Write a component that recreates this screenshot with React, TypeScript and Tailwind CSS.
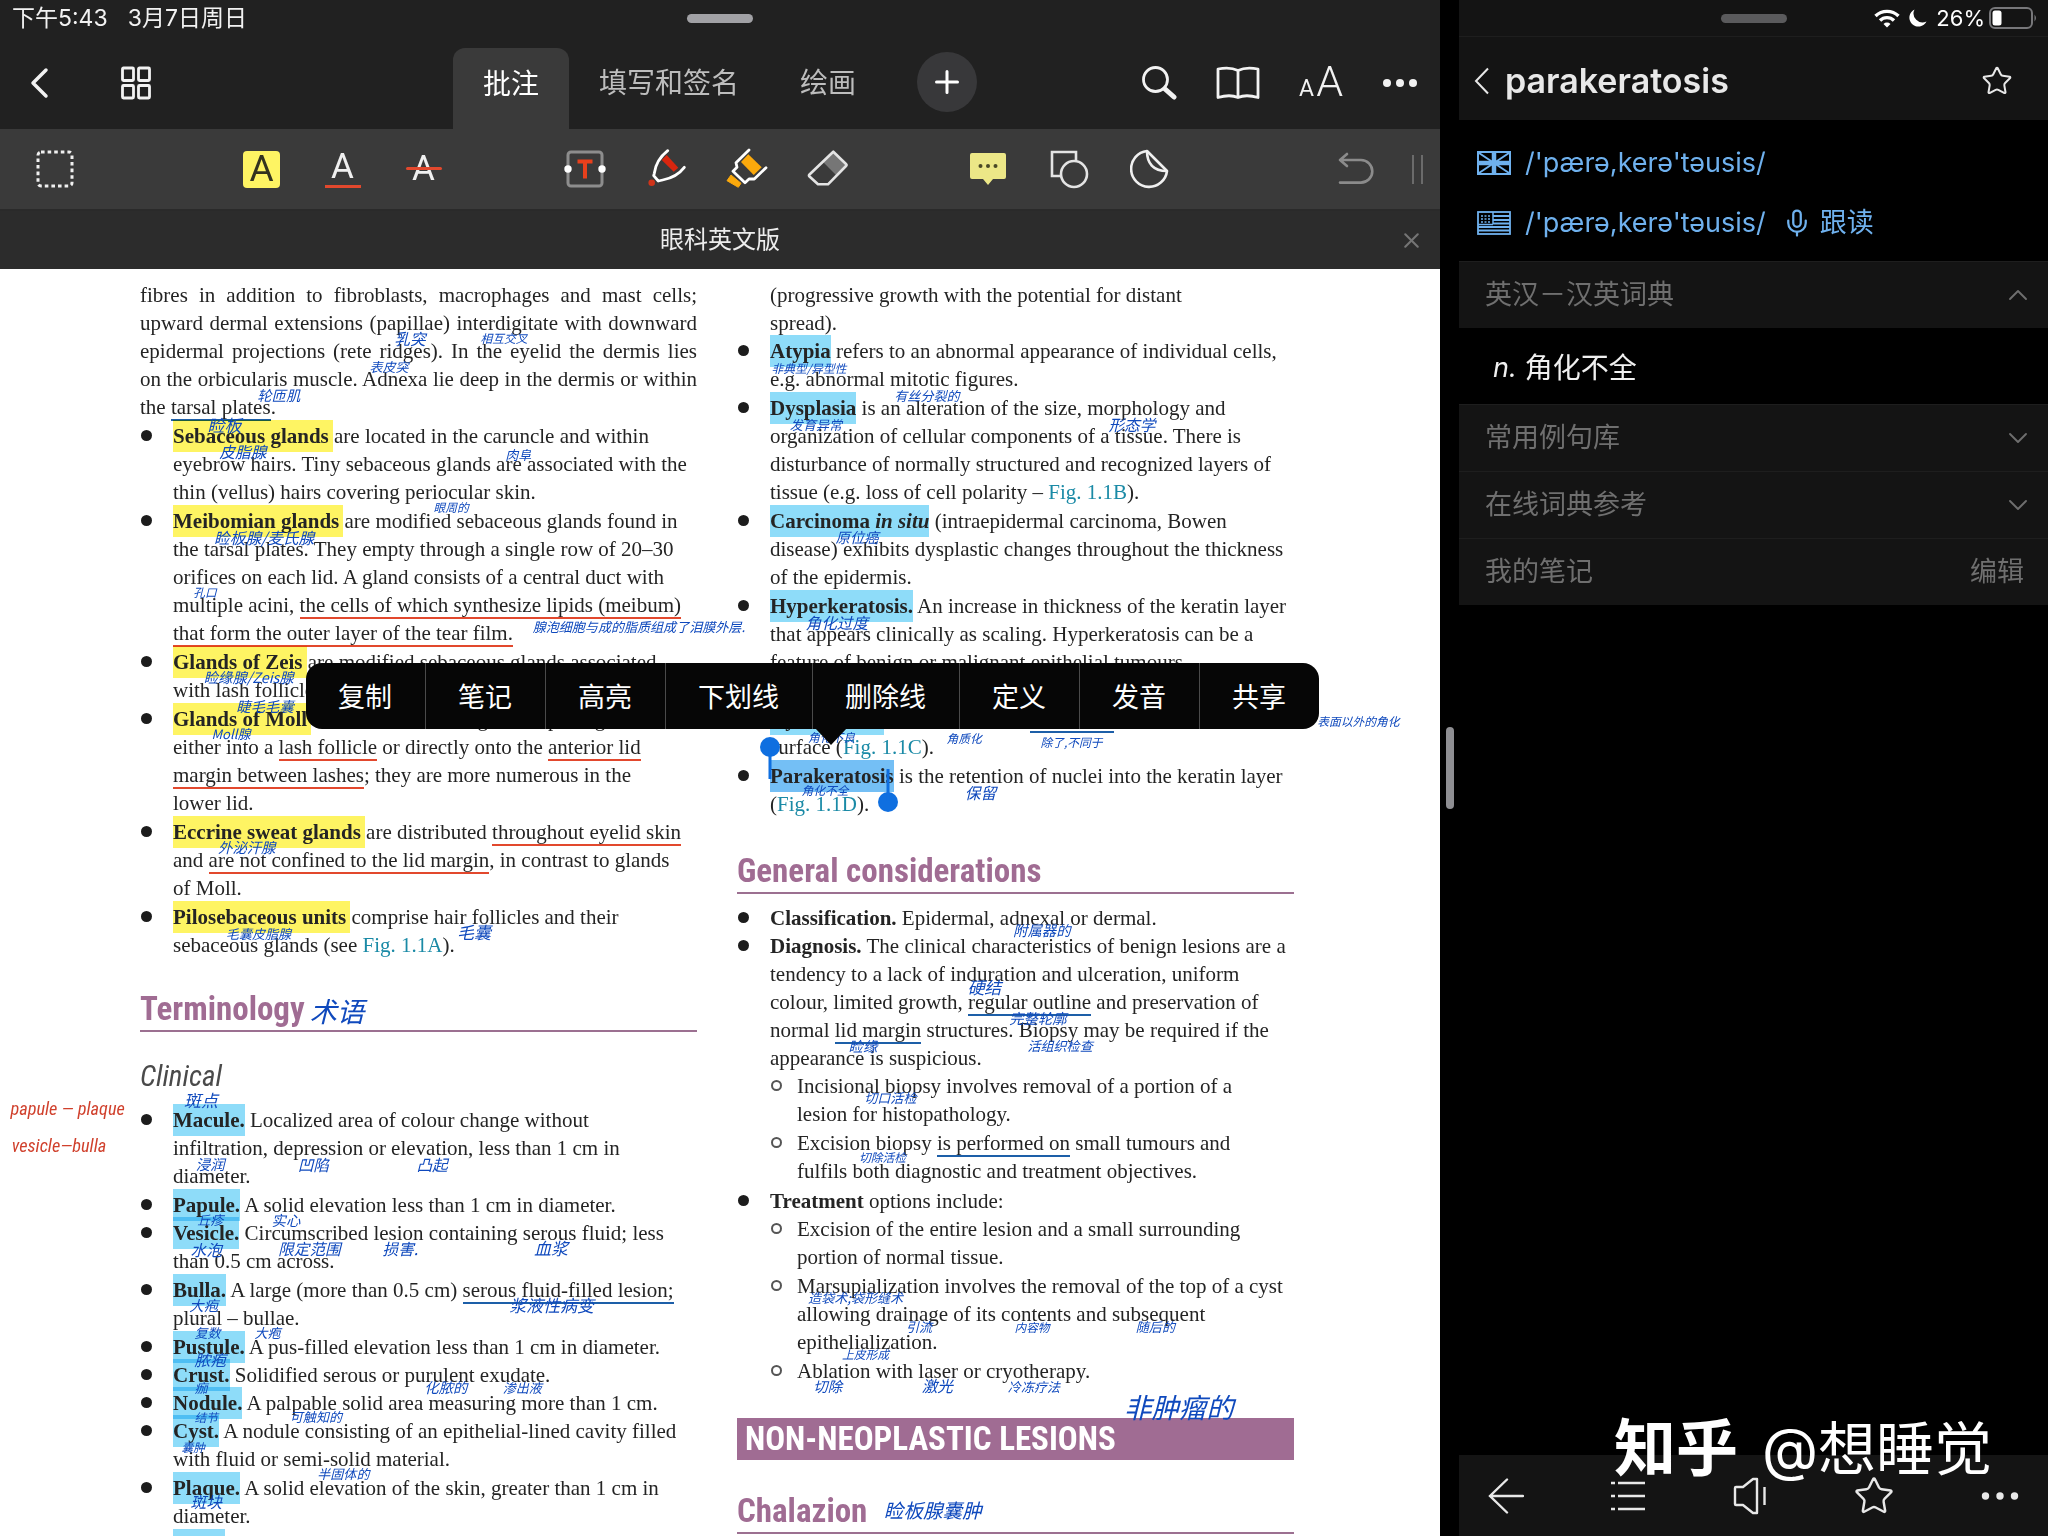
import React from 'react';
import { ChevronDown, ChevronUp, Mic, Star, X } from 'lucide-react';

type Props = { children?: React.ReactNode };

const Yellow = ({ children }: Props) => (
  <strong className="-mr-1 bg-[#fef463] py-1 pr-1 font-bold mix-blend-multiply">{children}</strong>
);
const Blue = ({ children }: Props) => (
  <strong className="bg-[#8edcf9] py-1 font-bold mix-blend-multiply">{children}</strong>
);
const Red = ({ children }: Props) => <span className="border-b-2 border-[#e2482d]">{children}</span>;
const Pen = ({ children }: Props) => <span className="border-b-2 border-[#1d5fa8]">{children}</span>;
const Fig = ({ children }: Props) => (
  <a href="#figure" className="text-[#1a8aa6]">
    {children}
  </a>
);

// A bulleted entry, one child per printed line
const Entry = ({ lines, children }: { lines: React.ReactNode[] } & Props) => (
  <li className={lines.length > 1 ? 'relative pb-px pl-[33px]' : 'relative pl-[33px]'}>
    <span className="absolute top-2 left-px size-[11px] rounded-full bg-[#1c1c1c]" />
    {lines.map((line, i) => (
      <div key={i}>{line}</div>
    ))}
    {children}
  </li>
);

const SubEntry = ({ lines }: { lines: React.ReactNode[] }) => (
  <li className="relative pb-px pl-[27px]">
    <span className="absolute top-2 left-px size-[11px] rounded-full border-2 border-[#555]" />
    {lines.map((line, i) => (
      <div key={i}>{line}</div>
    ))}
  </li>
);

const Heading = ({ children }: Props) => (
  <h2 className="border-b-2 border-[#9c7091] font-['Liberation_Sans_Narrow','Roboto_Condensed',sans-serif] text-[33px] leading-[42px] font-bold text-[#a06c93]">
    {children}
  </h2>
);

// x, baseline, size, text
const notes: [number, number, number, string][] = [
  [302, 264, 12, '乳突'],
  [368, 263, 9, '相互交叉'],
  [283, 285, 10, '表皮突'],
  [197, 307, 11, '轮匝肌'],
  [159, 331, 13, '睑板'],
  [168, 351, 12, '皮脂腺'],
  [387, 352, 10, '肉阜'],
  [332, 392, 9, '眼周的'],
  [164, 417, 12, '睑板腺/麦氏腺'],
  [148, 457, 9, '孔口'],
  [408, 484, 10, '腺泡细胞与成的脂质组成了泪膜外层.'],
  [156, 523, 11, '睑缘腺/Zeis腺'],
  [181, 545, 11, '睫毛毛囊'],
  [162, 566, 10, 'Moll腺'],
  [167, 653, 11, '外泌汗腺'],
  [173, 719, 10, '毛囊皮脂腺'],
  [350, 719, 13, '毛囊'],
  [237, 783, 21, '术语'],
  [141, 848, 13, '斑点'],
  [150, 896, 11, '浸润'],
  [228, 897, 12, '凹陷'],
  [319, 897, 12, '凸起'],
  [151, 938, 10, '丘疹'],
  [208, 939, 11, '实心'],
  [146, 962, 12, '水泡'],
  [213, 961, 12, '限定范围'],
  [293, 961, 12, '损害.'],
  [409, 961, 13, '血浆'],
  [145, 1004, 11, '大疱'],
  [390, 1005, 13, '浆液性病变'],
  [149, 1025, 10, '复数'],
  [195, 1025, 10, '大疱'],
  [149, 1046, 12, '脓疱'],
  [149, 1067, 10, '痂'],
  [325, 1067, 11, '化脓的'],
  [385, 1067, 10, '渗出液'],
  [149, 1089, 9, '结节'],
  [222, 1089, 10, '可触知的'],
  [139, 1112, 9, '囊肿'],
  [243, 1133, 10, '半固体的'],
  [146, 1155, 12, '斑块'],
  [591, 286, 9, '非典型/异型性'],
  [685, 307, 10, '有丝分裂的'],
  [605, 329, 10, '发育异常'],
  [849, 330, 12, '形态学'],
  [640, 416, 11, '原位癌'],
  [617, 482, 12, '角化过度'],
  [1009, 556, 9, '表面以外的角化'],
  [725, 569, 9, '角质化'],
  [797, 572, 9, '除了,不同于'],
  [619, 568, 9, '角化不良'],
  [614, 609, 9, '角化不全'],
  [739, 612, 12, '保留'],
  [776, 717, 11, '附属器的'],
  [741, 761, 13, '硬结'],
  [773, 784, 11, '完整轮廓'],
  [650, 806, 11, '睑缘'],
  [787, 805, 10, '活组织检查'],
  [662, 845, 10, '切口活检'],
  [658, 890, 9, '切除活检'],
  [619, 998, 10, '造袋术;袋形缝术'],
  [694, 1020, 10, '引流'],
  [777, 1020, 9, '内容物'],
  [870, 1020, 10, '随后的'],
  [645, 1041, 9, '上皮形成'],
  [623, 1066, 11, '切除'],
  [706, 1066, 12, '激光'],
  [772, 1066, 10, '冷冻疗法'],
  [861, 1086, 21, '非肿瘤的'],
  [677, 1163, 15, '睑板腺囊肿'],
];

const Ink = () => (
  <svg viewBox="0 206 1103 970" className="pointer-events-none absolute top-0 left-0 w-full" aria-label="Handwritten notes">
    <g fill="#0f49bd" fontFamily="'Noto Sans CJK SC', sans-serif" fontStyle="italic" fontWeight="400">
      {notes.map(([x, y, size, text]) => (
        <text key={`${x}-${y}`} x={x} y={y} fontSize={size}>
          {text}
        </text>
      ))}
    </g>
    <g fill="#d0402c" fontFamily="'Roboto Condensed', 'Liberation Sans Narrow', sans-serif" fontStyle="italic" fontSize="14">
      <text x="8" y="854">papule — plaque</text>
      <text x="9" y="882">vesicle—bulla</text>
    </g>
  </svg>
);

const ToolButton = ({ label, children }: { label: string } & Props) => (
  <button aria-label={label} className="flex h-20 w-[81px] items-center justify-center">
    {children}
  </button>
);

const Toolbar = () => (
  <div className="flex h-[82px] items-center border-b-2 border-[#2a2a2a] bg-[#3a3a3a] pl-3.5 text-[#f0f0f0]">
    <ToolButton label="Select">
      <svg width="40" height="40" viewBox="0 0 40 40" fill="none" stroke="currentColor" strokeWidth="3">
        <rect x="3" y="3" width="34" height="34" rx="3" strokeDasharray="3.6 3" />
      </svg>
    </ToolButton>
    <div className="ml-[126px] flex">
      <ToolButton label="Highlight">
        <span className="flex size-[37px] items-center justify-center rounded-sm bg-[#fef463] font-[Roboto] text-[37px] text-[#33331f]">A</span>
      </ToolButton>
      <ToolButton label="Underline">
        <span className="flex h-[37px] w-9 items-center justify-center border-b-3 border-[#e2482d] font-[Roboto] text-[35px]">A</span>
      </ToolButton>
      <ToolButton label="Strikethrough">
        <span className="relative flex h-[37px] w-9 items-center justify-center font-[Roboto] text-[35px]">
          A<span className="absolute top-4 left-0 h-[3px] w-full rounded bg-[#e2482d]" />
        </span>
      </ToolButton>
    </div>
    <div className="ml-20 flex">
      <ToolButton label="Text">
        <svg width="42" height="40" viewBox="0 0 42 40" fill="none">
          <rect x="4" y="3" width="34" height="34" rx="3" stroke="#8d8d8d" strokeWidth="3" />
          <circle cx="4" cy="20" r="3.700" fill="#fff" />
          <circle cx="38" cy="20" r="3.700" fill="#fff" />
          <path d="M13.500 12.500h15M21 12.500v17" stroke="#e8401c" strokeWidth="4" />
        </svg>
      </ToolButton>
      <ToolButton label="Pen">
        <svg width="40" height="40" viewBox="0 0 40 40" fill="none">
          <path d="M20.700 6 L32.300 18.700 L27.700 22.700 L15.700 11 Z" fill="#d9260f" />
          <path d="M21.700 1.700 Q10 11 8.300 24.300 L7.700 26.700 L12.300 32 L16.700 31 Q31 28 38.300 18.300" stroke="#fff" strokeWidth="2.800" strokeLinecap="round" strokeLinejoin="round" />
          <circle cx="5.700" cy="33.700" r="3.300" fill="#d0341a" />
        </svg>
      </ToolButton>
      <ToolButton label="Marker">
        <svg width="44" height="42" viewBox="0 0 44 42" fill="none">
          <path d="M23.300 6.300 L36.700 19.300 L28.700 27 L16 14 Z" fill="#fba90c" />
          <path d="M24 2 L11 14.700 L12 19.300 L8 23.300 L20 34.700 L24 31 L29.300 31 L41 19.700" stroke="#fff" strokeWidth="2.800" strokeLinecap="round" strokeLinejoin="round" />
          <path d="M6 27 L16 35.300 L13.300 39.300 L2 32.700 Z" fill="#fba90c" stroke="#fba90c" strokeLinejoin="round" />
        </svg>
      </ToolButton>
      <ToolButton label="Eraser">
        <svg width="42" height="40" viewBox="0 0 42 40" fill="none" strokeLinejoin="round">
          <path d="M16.300 13.300 L26.300 3 L39 16 L29 26 Z" fill="#767676" />
          <path d="M26.300 2.700 L39 15 Q40 16 39 17 L21 35.300 H11 L2.500 27.500 Q1.500 26.500 2.500 25.500 Z" stroke="#e4e4e4" strokeWidth="2.600" />
        </svg>
      </ToolButton>
    </div>
    <div className="ml-[79px] flex">
      <ToolButton label="Note">
        <svg width="38" height="34" viewBox="0 0 38 34">
          <path d="M3 1h32a2 2 0 0 1 2 2v22a2 2 0 0 1-2 2H24l-5 6-5-6H3a2 2 0 0 1-2-2V3a2 2 0 0 1 2-2z" fill="#ece787" />
          <g fill="#4a4826">
            <circle cx="11.500" cy="14" r="2" />
            <circle cx="19" cy="14" r="2" />
            <circle cx="26.500" cy="14" r="2" />
          </g>
        </svg>
      </ToolButton>
      <ToolButton label="Shapes">
        <svg width="40" height="40" viewBox="0 0 40 40" fill="none" stroke="#e4e4e4" strokeWidth="2.600">
          <path d="M12 27H3V3h24v8" />
          <circle cx="25" cy="25" r="13" />
        </svg>
      </ToolButton>
      <ToolButton label="Sticker">
        <svg width="40" height="40" viewBox="0 0 40 40" fill="none" stroke="#f0f0f0" strokeWidth="2.600" strokeLinejoin="round">
          <path d="M17 2 A18 18 0 1 0 37 22 Z" />
          <path d="M17 2 C17 14 23 22 37 22" />
        </svg>
      </ToolButton>
    </div>
    <div className="ml-auto flex items-center pr-[17px] text-[#8b8b8b]">
      <ToolButton label="Undo">
        <svg width="36" height="34" viewBox="0 0 36 34" fill="none" stroke="currentColor" strokeWidth="2.600" strokeLinecap="round" strokeLinejoin="round">
          <path d="M9 2 L2 8 L9 14 M2 8 H23 a11.300 11.300 0 0 1 0 22.600 H2" />
        </svg>
      </ToolButton>
      <div className="ml-4 h-[29px] w-[11px] border-x-2 border-[#6b6b6b]" />
    </div>
  </div>
);

const TopBar = () => (
  <header className="bg-[#212121] text-[#f2f2f2]">
    <div className="grid h-12 grid-cols-3 items-start px-3 pt-1">
      <div className="flex gap-5 font-['Inter','Noto_Sans_CJK_SC',sans-serif] text-[23px] leading-7 whitespace-nowrap">
        <span>下午5:43</span>
        <span>3月7日周日</span>
      </div>
      <span className="mt-2.5 h-[9px] w-[66px] justify-self-center rounded-full bg-[#a1a1a5]" />
    </div>
    <div className="flex h-[81px]">
      <div className="flex h-[70px] w-[453px] items-center gap-[65px] pl-[27px]">
        <button aria-label="Back">
          <svg width="26" height="32" viewBox="0 0 26 32" fill="none" stroke="currentColor" strokeWidth="3.500" strokeLinecap="round" strokeLinejoin="round">
            <path d="M19 3 L6 16 L19 29" />
          </svg>
        </button>
        <button aria-label="Thumbnails">
          <svg width="36" height="34" viewBox="0 0 36 34" fill="none" stroke="currentColor" strokeWidth="2.800">
            <rect x="4.500" y="2" width="11" height="12.500" rx="1" />
            <rect x="20.500" y="2" width="11" height="12.500" rx="1" />
            <rect x="4.500" y="19.500" width="11" height="12.500" rx="1" />
            <rect x="20.500" y="19.500" width="11" height="12.500" rx="1" />
          </svg>
        </button>
      </div>
      <nav className="flex text-[28px]">
        <button className="h-full w-[116px] rounded-t-xl bg-[#3a3a3a] pb-2.5 text-white">批注</button>
        <button className="h-[70px] px-[30px] text-[#bdbdbd]">填写和签名</button>
        <button className="h-[70px] px-[31px] text-[#bdbdbd]">绘画</button>
        <button aria-label="Add" className="mt-1 ml-[30px] flex size-[60px] items-center justify-center rounded-full bg-[#38383a]">
          <svg width="24" height="24" viewBox="0 0 24 24" stroke="#fff" strokeWidth="3" strokeLinecap="round">
            <path d="M12 1.500v21M1.500 12h21" />
          </svg>
        </button>
      </nav>
      <div className="ml-auto flex h-[70px] items-center gap-[39px] pr-[22px]">
        <button aria-label="Search">
          <svg width="36" height="36" viewBox="0 0 36 36" fill="none" stroke="currentColor" strokeLinecap="round">
            <circle cx="14.500" cy="14.500" r="12" strokeWidth="2.800" />
            <path d="M24 24 L33 32" strokeWidth="5" />
          </svg>
        </button>
        <button aria-label="Reader">
          <svg width="44" height="34" viewBox="0 0 44 34" fill="none" stroke="currentColor" strokeWidth="2.800" strokeLinejoin="round">
            <path d="M22 4.500 Q14 .5 2 3 V31.500 Q14 28 22 31.500 Q30 28 42 31.500 V3 Q30 .5 22 4.500 V31.500" />
          </svg>
        </button>
        <button aria-label="Text size" className="flex items-baseline gap-0.5 font-[Roboto]">
          <span className="text-[23px]">A</span>
          <span className="text-[43px] leading-none font-light">A</span>
        </button>
        <button aria-label="More">
          <svg width="36" height="10" viewBox="0 0 36 10" fill="currentColor">
            <circle cx="5" cy="5" r="4" />
            <circle cx="18" cy="5" r="4" />
            <circle cx="31" cy="5" r="4" />
          </svg>
        </button>
      </div>
    </div>
  </header>
);

const LeftColumn = () => (
  <div>
    <p className="pb-px *:block [&>span:not(:last-child)]:[text-align-last:justify]">
      <span>fibres in addition to fibroblasts, macrophages and mast cells;</span>
      <span>upward dermal extensions (papillae) interdigitate with downward</span>
      <span>epidermal projections (rete ridges). In the eyelid the dermis lies</span>
      <span>on the orbicularis muscle. Adnexa lie deep in the dermis or within</span>
      <span>
        the <Pen>tarsal plates</Pen>.
      </span>
    </p>
    <ul>
      <Entry
        lines={[
          <><Yellow>Sebaceous glands</Yellow> are located in the caruncle and within</>,
          'eyebrow hairs. Tiny sebaceous glands are associated with the',
          'thin (vellus) hairs covering periocular skin.',
        ]}
      />
      <Entry
        lines={[
          <><Yellow>Meibomian glands</Yellow> are modified sebaceous glands found in</>,
          'the tarsal plates. They empty through a single row of 20–30',
          'orifices on each lid. A gland consists of a central duct with',
          <>multiple acini, <Red>the cells of which synthesize lipids (meibum)</Red></>,
          <Red>that form the outer layer of the tear film.</Red>,
        ]}
      />
      <Entry lines={[<><Yellow>Glands of Zeis</Yellow> are modified sebaceous glands associated</>, 'with lash follicles.']} />
      <Entry
        lines={[
          <><Yellow>Glands of Moll</Yellow> are modified sweat glands opening</>,
          <>either into a <Red>lash follicle</Red> or directly onto the <Red>anterior lid</Red></>,
          <><Red>margin between lashes</Red>; they are more numerous in the</>,
          'lower lid.',
        ]}
      />
      <Entry
        lines={[
          <><Yellow>Eccrine sweat glands</Yellow> are distributed <Red>throughout eyelid skin</Red></>,
          <>and <Red>are not confined to the lid margin</Red>, in contrast to glands</>,
          'of Moll.',
        ]}
      />
      <Entry
        lines={[
          <><Yellow>Pilosebaceous units</Yellow> comprise hair follicles and their</>,
          <>sebaceous glands (see <Fig>Fig. 1.1A</Fig>).</>,
        ]}
      />
    </ul>
    <div className="mt-7">
      <Heading>Terminology</Heading>
    </div>
    <h3 className="mt-7 mb-3.5 font-['Liberation_Sans_Narrow','Roboto_Condensed',sans-serif] text-[29px] leading-8 text-[#4a4a4a] italic">Clinical</h3>
    <ul>
      <Entry
        lines={[
          <><Blue>Macule.</Blue> Localized area of colour change without</>,
          'infiltration, depression or elevation, less than 1 cm in',
          'diameter.',
        ]}
      />
      <Entry lines={[<><Blue>Papule.</Blue> A solid elevation less than 1 cm in diameter.</>]} />
      <Entry lines={[<><Blue>Vesicle.</Blue> Circumscribed lesion containing serous fluid; less</>, 'than 0.5 cm across.']} />
      <Entry lines={[<><Blue>Bulla.</Blue> A large (more than 0.5 cm) <Pen>serous fluid-filled lesion;</Pen></>, 'plural – bullae.']} />
      <Entry lines={[<><Blue>Pustule.</Blue> A pus-filled elevation less than 1 cm in diameter.</>]} />
      <Entry lines={[<><Blue>Crust.</Blue> Solidified serous or purulent exudate.</>]} />
      <Entry lines={[<><Blue>Nodule.</Blue> A palpable solid area measuring more than 1 cm.</>]} />
      <Entry lines={[<><Blue>Cyst.</Blue> A nodule consisting of an epithelial-lined cavity filled</>, 'with fluid or semi-solid material.']} />
      <Entry lines={[<><Blue>Plaque.</Blue> A solid elevation of the skin, greater than 1 cm in</>, 'diameter.']} />
      <Entry lines={[<><Blue>Ulcer.</Blue> A circumscribed area of tissue loss.</>]} />
    </ul>
  </div>
);

const RightColumn = () => (
  <div>
    <div className="pl-[33px]">
      <div>(progressive growth with the potential for distant</div>
      <div>spread).</div>
    </div>
    <ul>
      <Entry lines={[<><Blue>Atypia</Blue> refers to an abnormal appearance of individual cells,</>, 'e.g. abnormal mitotic figures.']} />
      <Entry
        lines={[
          <><Blue>Dysplasia</Blue> is an alteration of the size, morphology and</>,
          'organization of cellular components of a tissue. There is',
          'disturbance of normally structured and recognized layers of',
          <>tissue (e.g. loss of cell polarity – <Fig>Fig. 1.1B</Fig>).</>,
        ]}
      />
      <Entry
        lines={[
          <><Blue>Carcinoma <em>in situ</em></Blue> (intraepidermal carcinoma, Bowen</>,
          'disease) exhibits dysplastic changes throughout the thickness',
          'of the epidermis.',
        ]}
      />
      <Entry
        lines={[
          <><Blue>Hyperkeratosis.</Blue> An increase in thickness of the keratin layer</>,
          'that appears clinically as scaling. Hyperkeratosis can be a',
          'feature of benign or malignant epithelial tumours.',
        ]}
      />
      <Entry
        lines={[
          'Dyskeratosis',
          <><Blue>Dyskeratosis</Blue> is keratinization <Pen>other than</Pen> on the</>,
          <>surface (<Fig>Fig. 1.1C</Fig>).</>,
        ]}
      />
      <Entry
        lines={[
          <>
            <strong className="bg-[#74bff5] py-1 mix-blend-multiply">Parakeratosis</strong> is the retention of nuclei into the keratin layer
          </>,
          <>(<Fig>Fig. 1.1D</Fig>).</>,
        ]}
      />
    </ul>
    <div className="mt-[31px]">
      <Heading>General considerations</Heading>
    </div>
    <ul className="mt-2.5">
      <Entry lines={[<><strong>Classification.</strong> Epidermal, adnexal or dermal.</>]} />
      <Entry
        lines={[
          <><strong>Diagnosis.</strong> The clinical characteristics of benign lesions are a</>,
          'tendency to a lack of induration and ulceration, uniform',
          <>colour, limited growth, <Pen>regular outline</Pen> and preservation of</>,
          <>normal <Pen>lid margin</Pen> structures. Biopsy may be required if the</>,
          'appearance is suspicious.',
        ]}
      >
        <ul>
          <SubEntry lines={['Incisional biopsy involves removal of a portion of a', 'lesion for histopathology.']} />
          <SubEntry lines={[<>Excision biopsy <Pen>is performed on</Pen> small tumours and</>, 'fulfils both diagnostic and treatment objectives.']} />
        </ul>
      </Entry>
      <Entry lines={[<><strong>Treatment</strong> options include:</>]}>
        <ul>
          <SubEntry lines={['Excision of the entire lesion and a small surrounding', 'portion of normal tissue.']} />
          <SubEntry lines={['Marsupialization involves the removal of the top of a cyst', 'allowing drainage of its contents and subsequent', 'epithelialization.']} />
          <SubEntry lines={['Ablation with laser or cryotherapy.']} />
        </ul>
      </Entry>
    </ul>
    <h1 className="mt-8 bg-[#a06c93] px-2 font-['Liberation_Sans_Narrow','Roboto_Condensed',sans-serif] text-[33px] leading-[42px] font-bold text-white">
      NON-NEOPLASTIC LESIONS
    </h1>
    <div className="mt-[30px]">
      <Heading>Chalazion</Heading>
    </div>
  </div>
);

const actions = ['复制', '笔记', '高亮', '下划线', '删除线', '定义', '发音', '共享'];

const SelectionMenu = () => (
  <div className="absolute top-[394px] left-[306px] flex h-[66px] rounded-2xl bg-[#060606] text-[27px] text-white">
    {actions.map((action) => (
      <button key={action} className="border-l border-[#4a4a4a] pt-1 pr-[33px] pl-8 whitespace-nowrap first:border-l-0">
        {action}
      </button>
    ))}
    <svg width="32" height="18" viewBox="0 0 32 18" className="absolute top-[65px] left-[509px]" fill="#060606">
      <path d="M0 0h32L16 17z" />
    </svg>
  </div>
);

const SelectionHandles = () => (
  <svg width="140" height="80" viewBox="0 0 140 80" className="absolute top-[467px] left-[758px]" fill="#0f6fe0">
    <circle cx="12" cy="11" r="10" />
    <rect x="10.500" y="11" width="3" height="32" />
    <circle cx="130" cy="66" r="10" />
    <rect x="128.500" y="33" width="3" height="32" />
  </svg>
);

const DictRow = ({ title, children }: { title: string } & Props) => (
  <button className="flex h-[67px] w-full items-center justify-between border-t border-[#1e1e1e] bg-[#141414] pr-3.5 pl-[26px] text-[27px] text-[#6f6f6f]">
    {title}
    {children}
  </button>
);

const UkFlag = () => (
  <svg width="34" height="24" viewBox="0 0 34 24" stroke="#6fb1ee" fill="none">
    <rect x="1" y="1" width="32" height="22" strokeWidth="2" />
    <path d="M17 1v22M1 12h32" strokeWidth="4.500" />
    <path d="M2 2l30 20M32 2L2 22" strokeWidth="2" />
  </svg>
);

const UsFlag = () => (
  <svg width="34" height="24" viewBox="0 0 34 24" stroke="#6fb1ee" fill="none">
    <rect x="1" y="1" width="32" height="22" strokeWidth="1.800" />
    <path d="M16 5h17M16 9h17M16 12.500h17M1 16h32M1 19.500h32" strokeWidth="1.800" />
    <path d="M16 1v12M1 13.500h15" strokeWidth="1.500" />
    <path d="M4 5h10M4 8h10M4 11h10" strokeWidth="1.500" strokeDasharray="2 1.500" />
  </svg>
);

const Dictionary = () => (
  <aside className="flex w-[589px] shrink-0 flex-col bg-black text-[#e8e8e8]">
    <div className="relative flex h-[37px] items-center justify-end gap-[9px] border-b border-[#1e1e1e] bg-[#141414] pr-2.5 text-white">
      <span className="absolute top-3.5 left-1/2 h-[9px] w-[66px] -translate-x-1/2 rounded-full bg-[#5a5a5c]" />
      <svg width="26" height="19" viewBox="0 0 26 19" fill="none" stroke="currentColor" strokeWidth="3.400">
        <path d="M1.500 7 a16.500 16.500 0 0 1 23 0" />
        <path d="M6 11.500 a10 10 0 0 1 14 0" />
        <path d="M9.500 15 L13 18.500 L16.500 15 a5 5 0 0 0 -7 0z" fill="currentColor" stroke="none" />
      </svg>
      <svg width="18" height="18" viewBox="0 0 18 18" fill="currentColor">
        <path d="M5.500 0.500 A9 9 0 1 0 17.500 12.500 A9 9 0 0 1 5.500 0.500 Z" />
      </svg>
      <div className="flex items-center gap-1">
        <span className="font-[Inter] text-[22px]">26%</span>
        <svg width="49" height="22" viewBox="0 0 49 22" fill="none">
          <rect x="1" y="1" width="42" height="20" rx="5" stroke="#77777a" strokeWidth="2" />
          <rect x="3.500" y="3.500" width="9" height="15" rx="2.500" fill="#fff" />
          <path d="M45.500 7.500 q3 3.500 0 7z" fill="#77777a" />
        </svg>
      </div>
    </div>
    <header className="flex h-[83px] items-center bg-[#141414] pt-1 pr-[35px] pl-3.5">
      <button aria-label="Back" className="mr-[15px]">
        <svg width="17" height="28" viewBox="0 0 17 28" fill="none" stroke="currentColor" strokeWidth="2">
          <path d="M15 1.500 L3 14 L15 26.500" />
        </svg>
      </button>
      <h1 className="font-['Inter','Liberation_Sans',sans-serif] text-[34px] font-semibold">parakeratosis</h1>
      <button aria-label="Favourite" className="ml-auto">
        <Star size={32} strokeWidth={1.5} />
      </button>
    </header>
    <div className="flex h-[141px] flex-col justify-center gap-6 px-[18px] pt-1 font-['Inter','Noto_Sans_CJK_SC',sans-serif] text-[27px] leading-9 text-[#6fb1ee]">
      <button className="flex items-center gap-3.5">
        <UkFlag />
        <span>/'pærə,kerə'təusis/</span>
      </button>
      <div className="flex items-center">
        <button className="flex items-center gap-3.5">
          <UsFlag />
          <span>/'pærə,kerə'təusis/</span>
        </button>
        <button className="ml-4 flex items-center gap-2">
          <Mic size={30} strokeWidth={1.8} />
          跟读
        </button>
      </div>
    </div>
    <DictRow title="英汉－汉英词典">
      <ChevronUp size={32} strokeWidth={1.4} />
    </DictRow>
    <p className="flex h-[76px] items-center gap-2 pt-1 pl-[34px] text-[28px] text-[#f0f0f0]">
      <em className="font-[Inter] text-[27px]">n.</em>角化不全
    </p>
    <DictRow title="常用例句库">
      <ChevronDown size={32} strokeWidth={1.4} />
    </DictRow>
    <DictRow title="在线词典参考">
      <ChevronDown size={32} strokeWidth={1.4} />
    </DictRow>
    <DictRow title="我的笔记">
      <span className="pr-2.5">编辑</span>
    </DictRow>
    <footer className="relative mt-auto flex h-[81px] items-center justify-between bg-[#141414] px-[29px]">
      <button aria-label="Previous">
        <svg width="36" height="42" viewBox="0 0 36 42" fill="none" stroke="currentColor" strokeWidth="2.400" strokeLinecap="round">
          <path d="M19 4.500 L2 21 L19 37.500 M2 21 H35" />
        </svg>
      </button>
      <button aria-label="List">
        <svg width="36" height="30" viewBox="0 0 36 30" stroke="currentColor" strokeWidth="2.600">
          <path d="M1 2h4M8 2h27M1 15h4M8 15h27M1 28h4M8 28h27" />
        </svg>
      </button>
      <button aria-label="Pronounce">
        <svg width="34" height="38" viewBox="0 0 34 38" fill="none" stroke="currentColor" strokeWidth="2.400" strokeLinejoin="round">
          <path d="M2 11 Q2 10 3 10 H10 L20 2 H24 V36 H20 L10 28 H3 Q2 28 2 27 Z" />
          <path d="M31.500 10v18" />
        </svg>
      </button>
      <button aria-label="Star">
        <Star size={42} strokeWidth={1.4} />
      </button>
      <button aria-label="More">
        <svg width="38" height="10" viewBox="0 0 38 10" fill="currentColor">
          <circle cx="4.500" cy="5" r="3.700" />
          <circle cx="19" cy="5" r="3.700" />
          <circle cx="33.500" cy="5" r="3.700" />
        </svg>
      </button>
      <div className="absolute right-[56px] bottom-[43px] flex items-center gap-6 leading-[88px] whitespace-nowrap text-white">
        <span className="text-[62px] font-bold">知乎</span>
        <span className="text-[58px]">@想睡觉</span>
      </div>
    </footer>
  </aside>
);

export default function App() {
  return (
    <div className="flex h-screen overflow-hidden bg-black font-['Inter','Noto_Sans_CJK_SC',sans-serif]">
      <div className="flex min-w-0 flex-1 flex-col">
        <TopBar />
        <Toolbar />
        <div className="grid h-[58px] shrink-0 grid-cols-[1fr_auto_1fr] items-center bg-[#2c2c2c] px-4 text-2xl text-[#ededed]">
          <span className="col-start-2">眼科英文版</span>
          <button aria-label="Close" className="justify-self-end text-[#757575]">
            <X size={25} />
          </button>
        </div>
        <main className="relative min-h-0 flex-1 overflow-hidden bg-white">
          <article className="grid grid-cols-2 gap-10 pt-3 pr-[146px] pl-[140px] font-['Liberation_Serif',serif] text-[21px] leading-7 whitespace-nowrap text-[#242424]">
            <LeftColumn />
            <RightColumn />
          </article>
          <Ink />
          <SelectionMenu />
          <SelectionHandles />
        </main>
      </div>
      <div className="flex w-[19px] shrink-0 items-center justify-center">
        <span className="h-[82px] w-2 rounded-full bg-[#8e8e92]" />
      </div>
      <Dictionary />
    </div>
  );
}
